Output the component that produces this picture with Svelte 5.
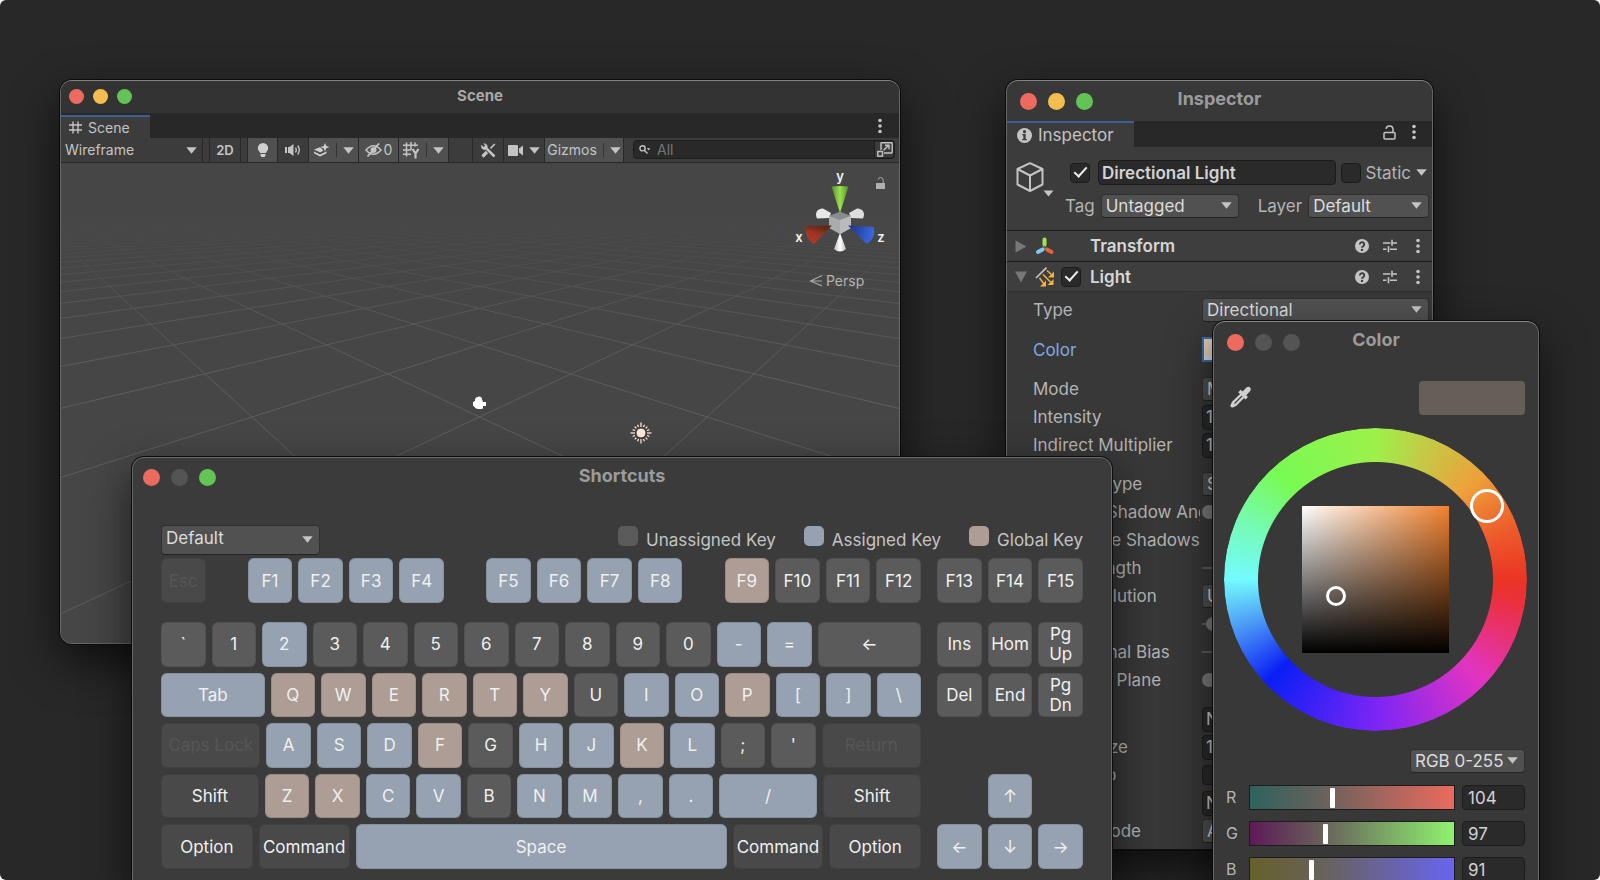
<script>
  const horizon = 34;
  const scale = 1.0345;
  const vanishing = [
    { side: 1, x: 886 },
    { side: -1, x: -49 },
  ];

  // Ground plane: two families of lines, each meeting in its own vanishing point.
  const gridLines = vanishing.flatMap(({ side, x }) =>
    Array.from({ length: 61 }, (_, i) => {
      const slope = scale * (side * (i - 56) - side * 2.0547);
      return { x1: x, y1: horizon, x2: x + slope * 480, y2: horizon + 480 };
    })
  );

  const k = (label, kind = 'free', w = 89) => ({ label, kind, w });
  const gap = { spacer: true, w: 60 };
  const many = (labels, kind) => labels.split(' ').map((l) => k(l, kind));

  const functionRow = [
    k('Esc', 'off'), gap,
    ...many('F1 F2 F3 F4', 'assigned'), gap,
    ...many('F5 F6 F7 F8', 'assigned'), gap,
    k('F9', 'global'), ...many('F10 F11 F12', 'free'),
  ];

  const rows = [
    [...many('` 1', 'free'), k('2', 'assigned'), ...many('3 4 5 6 7 8 9 0', 'free'), ...many('- =', 'assigned'), k('←', 'free', 207)],
    [k('Tab', 'assigned', 207), ...many('Q W E R T Y', 'global'), k('U'), ...many('I O', 'assigned'), k('P', 'global'), ...many('[ ] \\', 'assigned')],
    [k('Caps Lock', 'off', 199), ...many('A S D', 'assigned'), k('F', 'global'), k('G'), ...many('H J', 'assigned'), k('K', 'global'), k('L', 'assigned'), ...many("; '", 'free'), k('Return', 'off', 199)],
    [k('Shift', 'mod', 196), ...many('Z X', 'global'), ...many('C V', 'assigned'), k('B'), ...many('N M , .', 'assigned'), k('/', 'assigned', 196), k('Shift', 'mod', 196)],
    [k('Option', 'mod', 183), k('Command', 'mod', 181), k('Space', 'assigned', 740), k('Command', 'mod', 181), k('Option', 'mod', 183)],
  ];

  const navKeys = [
    { label: 'Ins', kind: 'free', area: '1 / 1' },
    { label: 'Hom', kind: 'free', area: '1 / 2' },
    { label: 'Pg Up', kind: 'free', area: '1 / 3' },
    { label: 'Del', kind: 'free', area: '2 / 1' },
    { label: 'End', kind: 'free', area: '2 / 2' },
    { label: 'Pg Dn', kind: 'free', area: '2 / 3' },
    { label: '↑', kind: 'assigned', area: '4 / 2' },
    { label: '←', kind: 'assigned', area: '5 / 1' },
    { label: '↓', kind: 'assigned', area: '5 / 2' },
    { label: '→', kind: 'assigned', area: '5 / 3' },
  ];

  const legend = [
    { label: 'Unassigned Key', kind: 'free' },
    { label: 'Assigned Key', kind: 'assigned' },
    { label: 'Global Key', kind: 'global' },
  ];

  const properties = [
    { id: 'baking', label: 'Mode', type: 'select', value: 'Mixed' },
    { id: 'intensity', label: 'Intensity', type: 'text', value: '1' },
    { id: 'indirect', label: 'Indirect Multiplier', type: 'text', value: '1', last: true },
    { id: 'shadow', label: 'Shadow Type', type: 'select', value: 'Soft Shadows' },
    { id: 'angle', label: 'Baked Shadow Angle', type: 'range', value: 0, indent: true },
    { id: 'realtime', label: 'Realtime Shadows', type: 'none', indent: true },
    { id: 'strength', label: 'Strength', type: 'range', value: 100, deep: true },
    { id: 'resolution', label: 'Resolution', type: 'select', value: 'Use Quality Settings', deep: true },
    { id: 'bias', label: '', type: 'range', value: 2 },
    { id: 'normal', label: 'Normal Bias', type: 'range', value: 40, deep: true },
    { id: 'near', label: 'Near Plane', type: 'range', value: 0, deep: true, last: true },
    { id: 'cookie', label: '', type: 'text', value: 'None' },
    { id: 'size', label: 'Cookie Size', type: 'text', value: '10' },
    { id: 'halo', label: 'Draw Halo', type: 'check' },
    { id: 'flare', label: '', type: 'text', value: 'None' },
    { id: 'render', label: 'Render Mode', type: 'select', value: 'Auto' },
  ];

  const channels = [
    { name: 'R', value: 104, pos: 103, from: '#2f625d', mid: '#68615b', to: '#ec6a5e' },
    { name: 'G', value: 97, pos: 94, from: '#5d1a57', mid: '#68615b', to: '#8ff36f' },
    { name: 'B', value: 91, pos: 76, from: '#66612a', mid: '#68615b', to: '#6865ef' },
  ];
</script>

{#snippet titlebar(title, lights, small)}
  <header class="titlebar" class:small>
    <div class="lights">
      {#each lights as c}<span class="light {c}"></span>{/each}
    </div>
    <h2>{title}</h2>
  </header>
{/snippet}

{#snippet dots()}
  <svg class="dots" width="4" height="16" viewBox="0 0 4 16" fill="#c4c4c4"><circle cx="2" cy="2.5" r="1.8" /><circle cx="2" cy="8" r="1.8" /><circle cx="2" cy="13.5" r="1.8" /></svg>
{/snippet}

{#snippet tri()}
  <svg width="11" height="7" viewBox="0 0 11 7" fill="#c4c4c4"><path d="M0.3 0.2h10.400L5.500 6.800z" /></svg>
{/snippet}

{#snippet dropdown(id, label, value)}
  <span class="select {id}">
    <select {id} aria-label={label}><option>{value}</option></select>
    <span class="caret">{@render tri()}</span>
  </span>
{/snippet}

{#snippet keycap(key, style)}
  <button class="key {key.kind}" {style} disabled={key.kind === 'off'}>{key.label}</button>
{/snippet}

{#snippet headTools(name)}
  <div class="tools">
    <button aria-label="{name} help">
      <svg width="14" height="14" viewBox="0 0 14 14"><circle cx="7" cy="7" r="7" fill="#c4c4c4" /><path d="M4.8 5.4a2.2 2.2 0 1 1 3.4 1.8C7.4 7.700 7 8 7 8.800" fill="none" stroke="#3c3c3c" stroke-width="1.900" /><circle cx="7" cy="10.900" r="1.200" fill="#3c3c3c" /></svg>
    </button>
    <button aria-label="{name} presets">
      <svg width="14" height="14" viewBox="0 0 14 14" fill="none" stroke="#c4c4c4" stroke-width="1.600"><path d="M0 4h7.500M9.500 4H14M9 0.800v6M0 10.200h3.500M7 10.200h7M5.500 7.200v6" /></svg>
    </button>
    <button aria-label="{name} menu">{@render dots()}</button>
  </div>
{/snippet}

<main class="desktop">
  <section class="window scene-window" aria-label="Scene">
    {@render titlebar('Scene', ['red', 'amber', 'green'], true)}
    <div class="tabrow">
      <button class="tab">
        <svg width="13" height="13" viewBox="0 0 13 13" fill="none" stroke="#c4c4c4" stroke-width="1.400"><path d="M4 0.500v12M9 0.500v12M0 4h13M0 9h13" /></svg>
        Scene
      </button>
      <button class="plain" aria-label="Scene menu">{@render dots()}</button>
    </div>
    <div class="toolbar">
      <button class="wire">Wireframe {@render tri()}</button>
      <span class="slot"></span>
      <button class="narrow two-d">2D</button>
      <span class="slot"></span>
      <button class="narrow bulb lit" aria-label="Lighting">
        <svg width="12" height="15" viewBox="0 0 12 15" fill="#d0d0d0"><path d="M6 0a5.200 5.200 0 0 0-5.200 5.200c0 2 1.500 3 2.400 4.800h5.600c.9-1.800 2.400-2.800 2.400-4.800A5.200 5.200 0 0 0 6 0zM3.500 11h5v1.500L7.500 14h-3l-1-1.500z" /></svg>
      </button>
      <button class="narrow" aria-label="Audio">
        <svg width="16" height="12" viewBox="0 0 16 12" fill="#c4c4c4"><path d="M0 3h2v6H0zM3 3h1.500L8.500 0v12L4.500 9H3z" /><path d="M10.500 3.500q1.500 2.500 0 5M12.800 1.500q3 4.500 0 9" fill="none" stroke="#c4c4c4" stroke-width="1.400" /></svg>
      </button>
      <button class="pair lit" aria-label="Effects">
        <svg width="16" height="14" viewBox="0 0 16 14" fill="#d0d0d0"><path d="M11 0l1.300 2.900L15.500 4l-3.200 1.200L11 8.500 9.700 5.200 6.500 4l3.200-1.100zM6 4.300L0 6.500l6 2.700 3-1.300L8.300 6zM0 8.500v1.700l6 3.300 6.500-3.300V8.500L6 11.500z" /></svg>
        <i></i>{@render tri()}
      </button>
      <button class="count lit" aria-label="Hidden objects">
        <svg width="17" height="14" viewBox="0 0 17 14" fill="none" stroke="#c4c4c4" stroke-width="1.500"><path d="M1 7q7.500-8.500 15 0q-7.500 8.500-15 0z" /><circle cx="8.500" cy="7" r="2.300" fill="#c4c4c4" /><path d="M2.500 13.500L14 0.500" stroke-width="1.800" /></svg>
        0
      </button>
      <button class="pair lit" aria-label="Grid visibility">
        <svg width="17" height="17" viewBox="0 0 17 17" fill="none" stroke="#c4c4c4" stroke-width="1.500"><path d="M3.500 0.500v14M8 0v8M12 0.500v4M0 3.200h15M0 8h8M0 12.300h8" /><path d="M9.500 7l3 4.500 3-4.500M12.500 11v5.500" stroke-width="2.200" /></svg>
        <i></i>{@render tri()}
      </button>
      <span class="blank"></span>
      <button class="narrow" aria-label="Component tools">
        <svg width="15" height="15" viewBox="0 0 15 15" fill="none" stroke="#c4c4c4"><path d="M4 4l9.500 9.500" stroke-width="2.500" /><path d="M0.700 2.200L2.500 4.200 4.400 2.500 2.800 0.700A3 3 0 1 1 0.700 2.200z" fill="#c4c4c4" stroke-width="0.500" /><path d="M13.800 1L9.500 5.300" stroke-width="1.700" /><path d="M6 9l-4.500 4.500" stroke-width="3.200" /></svg>
      </button>
      <button class="camera" aria-label="Scene camera">
        <svg width="15" height="11" viewBox="0 0 15 11" fill="#c4c4c4"><rect width="10" height="11" rx="1" /><path d="M11 3.500L15 0.500v10L11 7.500z" /></svg>
        {@render tri()}
      </button>
      <button class="gizmos lit">Gizmos <i></i>{@render tri()}</button>
      <div class="search">
        <svg width="12" height="9" viewBox="0 0 12 9" fill="none" stroke="#c4c4c4" stroke-width="1.400"><circle cx="3.500" cy="3.300" r="2.600" /><path d="M5.300 5.200L8.500 8.500" /><path d="M7.800 3.200h3.600L9.600 5.500z" fill="#c4c4c4" stroke="none" /></svg>
        <input type="text" placeholder="All" aria-label="Search scene" />
        <span class="expand">
          <svg width="16" height="15" viewBox="0 0 16 15" fill="none" stroke="#c4c4c4" stroke-width="1.400"><path d="M4 8V1.500Q4 0.800 4.700 0.800h9.800q.7 0 .7.700v8.800q0 .7-.7.700H7" /><rect x="0.800" y="9.500" width="4.700" height="4.700" /><path d="M6.500 8.300L11.800 3.300M8 3.200h4v4" /></svg>
        </span>
      </div>
    </div>
    <div class="viewport">
      <svg class="ground" viewBox="0 0 838 480" preserveAspectRatio="xMidYMin slice" aria-hidden="true">
        <defs>
          <linearGradient id="fade" x1="0" y1="0" x2="0" y2="1">
            <stop offset="0.090" stop-color="#fff" stop-opacity="0" />
            <stop offset="0.180" stop-color="#fff" stop-opacity="0.220" />
            <stop offset="0.300" stop-color="#fff" stop-opacity="0.750" />
            <stop offset="0.450" stop-color="#fff" stop-opacity="1" />
          </linearGradient>
          <mask id="haze" maskUnits="userSpaceOnUse" x="0" y="0" width="838" height="480"><rect width="838" height="480" fill="url(#fade)" /></mask>
        </defs>
        <g mask="url(#haze)" stroke="#5e5e5e" stroke-width="1">
          {#each gridLines as l}<line x1={l.x1} y1={l.y1} x2={l.x2} y2={l.y2} />{/each}
        </g>
        <path d="M412 239l2-1v-2q1-2.500 4-2.500t3 3l1 2.500h3v4h-3v2.500q-3 1-7 0l-3-3z" fill="#fff" />
        <g transform="translate(580 270)">
          <circle r="5" fill="#fdeadb" stroke="#3a2d24" stroke-width="1" />
          {#each Array.from({ length: 16 }) as _, i}
            <path d={i % 4 === 0 ? 'M0 -6V-10.500' : 'M0 -6.500V-9'} transform="rotate({i * 22.5})" stroke="#fdeadb" stroke-width="1.300" />
          {/each}
        </g>
      </svg>
      <svg class="gizmo" width="100" height="124" viewBox="0 -4 100 124">
        <defs>
          <linearGradient id="gg"><stop offset="0" stop-color="#4f8f30" /><stop offset="0.500" stop-color="#9be04d" /><stop offset="1" stop-color="#4f8f30" /></linearGradient>
          <linearGradient id="gw"><stop offset="0" stop-color="#bbb" /><stop offset="0.500" stop-color="#fff" /><stop offset="1" stop-color="#bbb" /></linearGradient>
          <linearGradient id="gr" x1="0" y1="1" x2="0.400" y2="0"><stop offset="0" stop-color="#b53a26" /><stop offset="0.600" stop-color="#a03424" /><stop offset="1" stop-color="#5e2a16" /></linearGradient>
          <linearGradient id="gb" x1="1" y1="0.500" x2="0" y2="0.300"><stop offset="0" stop-color="#3d6be0" /><stop offset="1" stop-color="#1c348c" /></linearGradient>
        </defs>
        <path d="M40.500 16.500q8.500-1 17 0L49 43z" fill="url(#gg)" />
        <path d="M38 48L26 48.500q-2.500-5 1-8.500 2.500-2 5-1.500L40 43z" fill="#e8e8e8" />
        <path d="M60 48l12 .5q2.500-5-1-8.500-2.500-2-5-1.500L58 43z" fill="#dedede" />
        <path d="M49 42l11 4v12l-11 6-11-6V46z" fill="#a9abad" />
        <path d="M49 42l11 4-11 4-11-4z" fill="#898b8f" />
        <path d="M49 50l11-4v12l-11 6z" fill="#b9bbbd" />
        <path d="M49 63l6 16q-6 5-12 0z" fill="url(#gw)" />
        <path d="M41 55.500L15 56q-1.500 13 8 18z" fill="url(#gr)" />
        <path d="M57 55.500L83 57q2 12-7.500 17z" fill="url(#gb)" />
        <g class="axes"><text x="49" y="11">y</text><text x="8" y="72">x</text><text x="90" y="72">z</text></g>
        <path d="M85 13h9v6h-9z" fill="#b0b0b0" />
        <path d="M87 9.500q.5-2 2.700-2t2.500 2.500V13" fill="none" stroke="#a8a8a8" />
        <path d="M31 105.500L19.500 111L31 116M19.500 111H31" fill="none" stroke="#a8a8a8" stroke-width="1.100" />
        <text class="persp" x="35" y="116">Persp</text>
      </svg>
    </div>
  </section>

  <section class="window inspector" aria-label="Inspector">
    {@render titlebar('Inspector', ['red', 'amber', 'green'], false)}
    <div class="tabrow">
      <button class="tab">
        <svg width="15" height="15" viewBox="0 0 15 15"><circle cx="7.500" cy="7.500" r="7.500" fill="#c4c4c4" /><circle cx="7.500" cy="3.700" r="1.600" fill="#3c3c3c" /><path d="M5.200 6h3.500v5h1.100v1.300H5.200V11h1.100V7.300H5.200z" fill="#3c3c3c" /></svg>
        Inspector
      </button>
      <button class="plain" aria-label="Lock inspector">
        <svg width="13" height="15" viewBox="0 0 13 15" fill="none" stroke="#c4c4c4" stroke-width="1.500"><rect x="1" y="7.500" width="11" height="6.500" rx="1" /><path d="M3 3.800Q3.500 1 6.500 1 10 1 10 4.500v3" /></svg>
      </button>
      <button class="plain" aria-label="Inspector menu">{@render dots()}</button>
    </div>
    <div class="object">
      <button class="cube" aria-label="Select icon">
        <svg width="38" height="36" viewBox="0 0 38 36"><path d="M14 1.200L26.500 7v15.500L14 29 1.500 22.500V7zM1.500 7L14 13.500 26.500 7M14 13.500V29" fill="none" stroke="#c4c4c4" stroke-width="2" stroke-linejoin="round" /><path d="M27.500 28.500h10l-5 6z" fill="#c4c4c4" /></svg>
      </button>
      <div class="fields">
        <div class="line first">
          <input class="check" type="checkbox" checked aria-label="Active" />
          <input class="text name" type="text" value="Directional Light" aria-label="Name" />
          <input class="check" type="checkbox" id="static" />
          <label for="static">Static</label>
          {@render tri()}
        </div>
        <div class="line">
          <label for="tag">Tag</label>
          {@render dropdown('tag', 'Tag', 'Untagged')}
          <label class="layer-label" for="layer">Layer</label>
          {@render dropdown('layer', 'Layer', 'Default')}
        </div>
      </div>
    </div>
    <div class="component">
      <svg class="fold" width="12" height="13" viewBox="0 0 12 13"><path d="M0.500 0.500L11.500 6.500 0.500 12.500z" fill="#777" /></svg>
      <svg class="kind" width="20" height="18" viewBox="0 0 20 18" stroke-linecap="round"><path d="M9.500 2.500L9.500 8" stroke="#a5e34c" stroke-width="4" /><path d="M9.500 9.500L9.500 12" stroke="#5a7d2e" stroke-width="2" /><path d="M7.500 12.500L3 15" stroke="#7fc6f5" stroke-width="4" /><path d="M12 12.500L16.500 15" stroke="#e8603c" stroke-width="4" /></svg>
      <h3 class="wide">Transform</h3>
      {@render headTools('Transform')}
    </div>
    <div class="component light-head">
      <svg class="fold" width="12" height="12" viewBox="0 0 12 12"><path d="M0 0.500h12L6 11.500z" fill="#777" /></svg>
      <svg class="kind" width="20" height="20" viewBox="0 0 20 20" fill="none"><path d="M1 11L11.500 0.700" stroke="#c4c4c4" stroke-width="1.700" /><path d="M12 3.500l5.500 5M8 7.500l8.500 8.500M4.500 11l5 6.500" stroke="#f2b23c" stroke-width="1.500" /><path d="M19 4.500v6h-6zM18.500 12v6h-6zM11 13.500v6H5z" fill="#f2b23c" /></svg>
      <input class="check" type="checkbox" checked aria-label="Light enabled" />
      <h3>Light</h3>
      {@render headTools('Light')}
    </div>
    <div class="props">
      <div class="prop"><label for="type">Type</label>{@render dropdown('type', 'Type', 'Directional')}</div>
      <div class="prop tall"><label class="link" for="tint">Color</label><button class="tint" id="tint" aria-label="Color"></button></div>
      {#each properties as p}
        <div class="prop" class:last={p.last} class:indent={p.indent} class:deep={p.deep}>
          <label for={p.id}>{p.label}</label>
          {#if p.type === 'select'}
            {@render dropdown(p.id, p.label, p.value)}
          {:else if p.type === 'text'}
            <input class="text" type="text" id={p.id} value={p.value} aria-label={p.id} />
          {:else if p.type === 'range'}
            <input class="slider" type="range" id={p.id} value={p.value} aria-label={p.id} />
          {:else if p.type === 'check'}
            <input class="check" type="checkbox" id={p.id} />
          {/if}
        </div>
      {/each}
    </div>
  </section>

  <section class="window shortcuts" aria-label="Shortcuts">
    {@render titlebar('Shortcuts', ['red', 'idle', 'green'], false)}
    <div class="board">
      <div class="head">
        {@render dropdown('profile', 'Profile', 'Default')}
        <ul class="legend">
          {#each legend as l}<li><span class="swatch {l.kind}"></span>{l.label}</li>{/each}
        </ul>
      </div>
      <div class="bank functions">
        <div class="keys row">
          {#each functionRow as key}
            {#if key.spacer}<span style="flex: {key.w} 1 0"></span>{:else}{@render keycap(key, `flex: ${key.w} 1 0`)}{/if}
          {/each}
        </div>
        <div class="nav">
          {#each ['F13', 'F14', 'F15'] as f}{@render keycap(k(f), '')}{/each}
        </div>
      </div>
      <div class="bank">
        <div class="keys">
          {#each rows as row}
            <div class="row">{#each row as key}{@render keycap(key, `flex: ${key.w} 1 0`)}{/each}</div>
          {/each}
        </div>
        <div class="nav full">
          {#each navKeys as key}{@render keycap(key, `grid-area: ${key.area}`)}{/each}
        </div>
      </div>
    </div>
  </section>

  <section class="window picker" aria-label="Color">
    {@render titlebar('Color', ['red', 'idle', 'idle'], false)}
    <div class="pick">
      <div class="head">
        <button class="plain" aria-label="Pick a colour from the screen">
          <svg width="22" height="22" viewBox="0 0 22 22"><path d="M12.500 5.500l4-4q2-1.500 3.700 0 1.500 2-.2 3.700l-3.800 4 1.800 1.800-2.500 2.500L8.200 6.200l2.500-2.500z" fill="#d0d0d0" /><path d="M11.200 8.500L3 16.500l-1 2.500 1 1 2.500-1 8-8" fill="none" stroke="#d0d0d0" stroke-width="2.400" /><path d="M0.500 19q2-2 3.500-2l1 1q0 2-2.500 3.500-2.500 0-2-2.500z" fill="#d0d0d0" /></svg>
        </button>
        <span class="current"></span>
      </div>
      <div class="wheel">
        <div class="ring"></div>
        <div class="square"><span class="pin small"></span></div>
        <span class="pin big"></span>
      </div>
      <div class="format-row">{@render dropdown('format', 'Format', 'RGB 0-255')}</div>
      {#each channels as c}
        <div class="channel">
          <label for="ch-{c.name}">{c.name}</label>
          <input class="bar" type="range" min="0" max="255" value={c.pos} id="ch-{c.name}" style="background: linear-gradient(90deg, {c.from}, {c.mid} 36%, {c.to})" />
          <input class="text" type="text" value={c.value} aria-label="{c.name} value" />
        </div>
      {/each}
    </div>
  </section>
</main>

<style>
  :global(body) { background: #fff; }
  * { box-sizing: border-box; }
  .desktop {
    position: relative;
    height: 100vh;
    overflow: hidden;
    border-radius: 6px;
    background: #282828;
    color: #c4c4c4;
    font: 17px/20px Inter, sans-serif;
  }
  button, input, select { font: inherit; color: inherit; margin: 0; padding: 0; border: 0; background: none; }
  svg { display: block; flex: none; }
  h2, h3, ul { margin: 0; padding: 0; font-size: inherit; list-style: none; }

  .window {
    position: absolute;
    overflow: hidden;
    border: 1px solid #666;
    border-top-color: #858585;
    border-radius: 12px;
    background: #383838;
    box-shadow: 0 0 0 1px #0c0c0c, 0 18px 45px rgba(0, 0, 0, 0.65);
  }
  .scene-window { left: 60px; top: 80px; width: 840px; height: 564px; display: flex; flex-direction: column; font-size: 14px; }
  .inspector { left: 1006px; top: 80px; width: 427px; height: 770px; border-bottom-color: #111; border-radius: 12px 12px 0 0; }
  .shortcuts { left: 132px; top: 457px; width: 980px; height: 440px; background: #3b3b3b; border-top-color: #6a6a6a; }
  .picker { left: 1213px; top: 321px; width: 326px; height: 600px; }

  .titlebar { display: grid; grid-template-columns: 1fr auto 1fr; align-items: center; height: 40px; padding: 0 13px; }
  .shortcuts .titlebar { padding: 0 10px; }
  .shortcuts .lights { padding-bottom: 2px; }
  .titlebar.small { height: 32px; padding: 0 8px; flex: none; background: #333; }
  .titlebar h2 { padding-bottom: 4px; font-size: 18px; font-weight: 700; color: #9b9b9b; }
  .titlebar.small h2 { padding-bottom: 2px; font-size: 15px; color: #a8a8a8; }
  .lights { display: flex; gap: 11px; }
  .light { width: 17px; height: 17px; border-radius: 50%; }
  .small .lights { gap: 9px; padding-bottom: 2px; }
  .small .light { width: 15px; height: 15px; }
  .red { background: #ec6a5e; }
  .amber { background: #f4bd4f; }
  .green { background: #61c454; }
  .idle { background: #545454; }

  .tabrow { display: flex; align-items: center; gap: 16px; height: 26px; flex: none; padding-right: 17px; background: #282828; }
  .tab { display: flex; align-items: center; gap: 5px; height: 100%; padding: 0 20px 0 8px; border-top: 2px solid #3a6290; background: #3c3c3c; margin-right: auto; }
  .scene-window .tabrow { height: 25px; }
  .scene-window .tab { margin-top: 2px; height: 23px; gap: 6px; }
  .inspector .tabrow { padding-right: 16px; }
  .inspector .tab { gap: 6px; padding: 0 20px 0 10px; }
  .plain { display: flex; }
  .inspector .tabrow .plain { padding-bottom: 4px; }

  .toolbar { display: flex; height: 25px; flex: none; background: #3c3c3c; border-bottom: 1px solid #282828; }
  .toolbar > * { flex: none; }
  .toolbar button { display: flex; align-items: center; justify-content: center; gap: 6px; border-right: 1px solid #282828; }
  .toolbar button.lit { background: #505050; }
  .toolbar .wire { width: 142px; padding: 0 5px 0 4px; justify-content: space-between; }
  .slot { width: 7px; border-right: 1px solid #282828; }
  .toolbar .narrow { width: 31px; }
  .toolbar .bulb { width: 30px; }
  .toolbar .two-d { font-size: 13px; font-weight: 600; }
  .toolbar .pair { width: 50px; }
  .pair i, .gizmos i { width: 1px; height: 14px; background: #333; }
  .toolbar .count { width: 40px; gap: 2px; }
  .blank { width: 24px; border-right: 1px solid #282828; }
  .toolbar .camera { width: 41px; }
  .toolbar .gizmos { width: 79px; }
  .toolbar .search { display: flex; align-items: center; gap: 6px; flex: 1; min-width: 0; height: 19px; margin: 2px 4px 2px 9px; padding: 0 2px 0 5px; border: 1px solid #1e1e1e; border-radius: 4px; background: #292929; }
  .search input { flex: 1; width: 0; min-width: 0; outline: 0; }
  .search input::placeholder { color: #767676; opacity: 1; }
  .expand { margin-right: -1px; padding-left: 2px; border-left: 1px solid #1e1e1e; background: #3c3c3c; }

  .viewport { position: relative; flex: 1; min-height: 0; background: #464646; }
  .ground { width: 100%; height: 100%; }
  .gizmo { position: absolute; top: 3px; right: 8px; }
  .axes text { font: 600 13px Inter, sans-serif; fill: #f2f2f2; text-anchor: middle; }
  .persp { font-size: 14px; fill: #b4b4b4; }

  .object { display: flex; gap: 11px; padding: 13px 3px 12px 9px; background: #3c3c3c; }
  .cube { align-self: flex-start; margin-top: 2px; }
  .fields { display: grid; grid-template-columns: minmax(0, 1fr); gap: 9px; flex: 1; min-width: 0; color: #b4b4b4; }
  .line { display: flex; align-items: center; gap: 6px; }
  .line.first { padding: 0 2px 0 5px; gap: 5px; }
  .select.tag { flex: 137; }
  .select.layer { flex: 120; }
  .layer-label { margin-left: 13px; }

  .check { appearance: none; display: grid; place-items: center; flex: none; width: 20px; height: 20px; border: 1px solid #1c1c1c; border-radius: 4px; background: #2a2a2a; }
  .check:checked::after { content: ''; width: 11px; height: 5px; border: solid #ececec; border-width: 0 0 2px 2px; transform: translateY(-2px) rotate(-48deg); }
  .text { height: 25px; min-width: 0; padding: 0 3px; border: 1px solid #1c1c1c; border-radius: 4px; background: #2a2a2a; color: #d2d2d2; }
  .name { flex: 1; width: 0; font-weight: 600; margin-left: 3px; }

  .select { position: relative; display: flex; min-width: 0; }
  select { appearance: none; width: 100%; height: 24px; padding: 0 22px 1px 4px; border: 1px solid #303030; border-bottom-color: #242424; border-radius: 4px; background: #515151; color: #dcdcdc; }
  .caret { position: absolute; right: 7px; top: 50%; margin-top: -4px; pointer-events: none; }

  .component { display: flex; align-items: center; height: 31px; padding: 0 12px 0 8px; border-top: 1px solid #1a1a1a; background: #3e3e3e; }
  .light-head { border-bottom: 1px solid #303030; }
  .fold { margin-right: 8px; }
  .kind { margin-right: 6px; }
  h3 { margin-left: 9px; font-weight: 600; color: #d6d6d6; }
  h3.wide { margin-left: 29px; }
  .tools { display: flex; gap: 14px; margin-left: auto; }
  .tools button { display: flex; align-items: center; }
  .tools button:last-child { margin-left: 5px; }

  .props { padding: 4px 3px 0 26px; }
  .prop { display: grid; grid-template-columns: 169px 1fr; align-items: center; height: 28px; color: #b4b4b4; }
  .prop.last { margin-bottom: 11px; }
  .prop.tall { height: 51px; }
  .prop label { overflow: hidden; white-space: nowrap; }
  .prop.indent label { padding-left: 19px; margin-right: 2px; }
  .prop.deep label { padding-left: 40px; }
  .prop .link { color: #7ea7e6; }
  .tint { height: 25px; border: 2px solid #3a6ea8; background: linear-gradient(#e3cfbd 80%, #d8d8e0 80%); }
  .slider { appearance: none; height: 14px; background: linear-gradient(#5e5e5e, #5e5e5e) center / 100% 2px no-repeat; }
  .slider::-webkit-slider-thumb { appearance: none; width: 14px; height: 14px; border-radius: 50%; background: #7d7d7d; }

  .board { padding: 27px 28px 0; }
  .board .head { display: flex; justify-content: space-between; align-items: flex-start; height: 33px; }
  .board .head .select { width: 159px; }
  .board .head select { height: 30px; padding-bottom: 4px; }
  .legend { display: flex; gap: 28px; }
  .legend li { display: flex; gap: 8px; padding-top: 1px; line-height: 28px; }
  .swatch { width: 20px; height: 20px; border-radius: 5px; }
  .bank { display: flex; gap: 16px; }
  .bank.functions { height: 45px; margin-bottom: 19px; }
  .keys { flex: 760; display: grid; grid-auto-rows: 1fr; gap: 6px; min-width: 0; }
  .bank:not(.functions) .keys, .nav.full { height: 247px; }
  .row, .keys.row { display: flex; gap: 6px; min-width: 0; }
  .nav { flex: 146; display: grid; grid-template-columns: repeat(3, 1fr); gap: 6px; }
  .nav.full { grid-template-rows: repeat(5, 1fr); }
  .key { min-width: 0; box-shadow: inset 0 0 0 1px rgba(0, 0, 0, 0.1); border-radius: 6px; color: #f0f0f0; line-height: 20px; }
  .free { background: #5b5b5b; }
  .assigned { background: #96a2b1; }
  .global { background: #ad9d94; }
  .mod { background: #494949; }
  .off { background: #494949; color: #565656; }

  .pick { padding: 19px 13px 0 10px; }
  .pick .head { display: flex; justify-content: space-between; align-items: flex-start; }
  .pick .head .plain { padding: 5px 6px; }
  .current { width: 106px; height: 34px; border-radius: 4px; background: #655f57; }
  .wheel { position: relative; display: grid; place-items: center; width: 303px; height: 303px; margin-top: 13px; }
  .ring {
    grid-area: 1 / 1;
    width: 100%;
    height: 100%;
    border-radius: 50%;
    background: conic-gradient(#9df04a 0deg, #c2cc46 20deg, #ef9f3a 46deg, #ed8133 56deg, #ed5a2c 70deg, #eb3423 90deg, #eb3040 100deg, #e234c2 133deg, #7b25f6 180deg, #0a1ff5 227deg, #4a96f5 250deg, #73fbfd 270deg, #75fbc0 290deg, #78fa54 317deg, #9df04a 360deg);
    mask: radial-gradient(circle, transparent 117px, #000 118px);
  }
  .square { position: relative; grid-area: 1 / 1; width: 147px; height: 147px; background: linear-gradient(to top, #000, transparent), linear-gradient(to right, #fff, #f0812f); }
  .pin { position: absolute; border: 3px solid #fff; border-radius: 50%; }
  .pin.big { left: 246px; top: 61px; width: 34px; height: 34px; }
  .pin.small { left: 24px; top: 80px; width: 20px; height: 20px; }
  .format-row { display: flex; justify-content: flex-end; margin: 18px 0 12px; }
  .format-row .select { width: 115px; }
  .format-row select { padding-right: 16px; }
  .channel { display: grid; grid-template-columns: 17px 1fr 63px; gap: 7px; align-items: center; margin-bottom: 11px; padding-left: 1px; }
  .channel label { font-size: 16px; padding: 0 0 2px 1px; color: #b4b4b4; }
  .channel .text { padding: 0 5px; }
  .bar { appearance: none; min-width: 0; height: 25px; border: 1px solid #1c1c1c; }
  .bar::-webkit-slider-thumb { appearance: none; width: 5px; height: 20px; border-radius: 1px; background: #fff; }
</style>
